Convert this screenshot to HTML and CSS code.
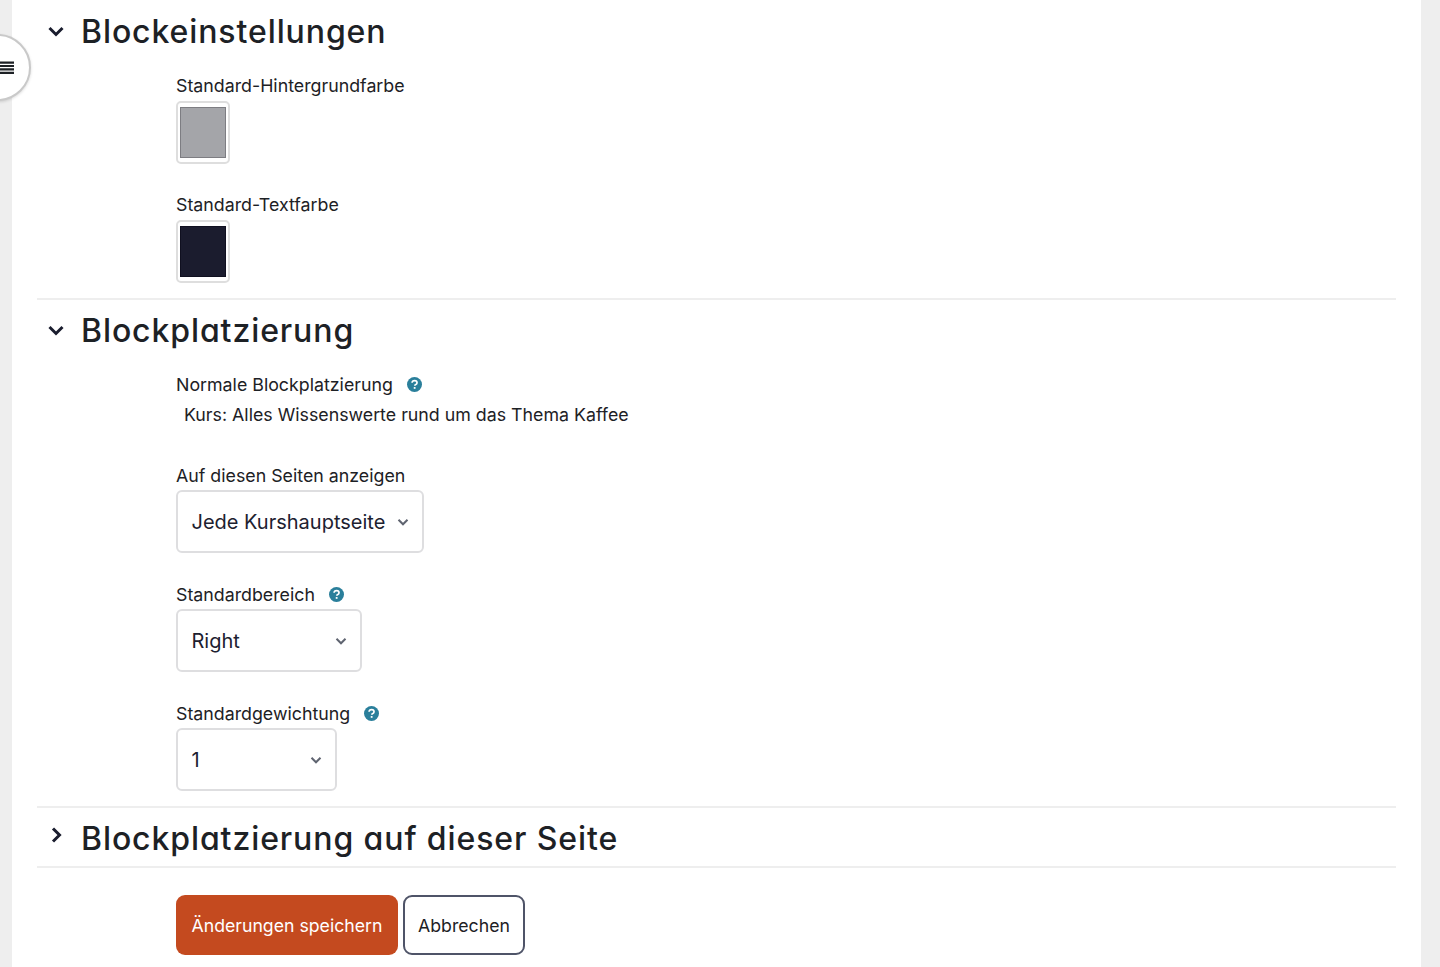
FILE: index.html
```html
<!DOCTYPE html>
<html lang="de">
<head>
    <meta charset="UTF-8">
    <meta name="viewport" content="width=device-width, initial-scale=1.0">
    <title>Blockeinstellungen</title>
    <link rel="stylesheet" href="styles.css">
</head>
<body>
    <button class="drawer-toggle" aria-label="Blockleiste">
        <svg width="14" height="14" viewBox="0 0 14 14"><path d="M0 .5h14v2.200H0zM0 3.900h14v2.200H0zM0 7.300h14v2.200H0zM0 10.700h14v2.200H0z" fill="#1d2125"/></svg>
    </button>

    <main class="page">
        <form class="settings">
            <section class="group">
                <h2 class="group-title">
                    <svg class="chevron" width="18" height="18" viewBox="0 0 18 18"><path d="M2.500 6l6.500 6.500L15.500 6" fill="none" stroke="#1a1d2e" stroke-width="3"/></svg>
                    Blockeinstellungen
                </h2>
                <div class="field field-color">
                    <label class="field-label">Standard-Hintergrundfarbe</label>
                    <div class="swatch"><span class="swatch-fill swatch-grey"></span></div>
                </div>
                <div class="field field-color">
                    <label class="field-label">Standard-Textfarbe</label>
                    <div class="swatch"><span class="swatch-fill swatch-dark"></span></div>
                </div>
            </section>

            <section class="group">
                <h2 class="group-title">
                    <svg class="chevron" width="18" height="18" viewBox="0 0 18 18"><path d="M2.500 6l6.500 6.500L15.500 6" fill="none" stroke="#1a1d2e" stroke-width="3"/></svg>
                    Blockplatzierung
                </h2>
                <div class="field">
                    <label class="field-label">Normale Blockplatzierung
                        <svg class="help" width="15" height="15" viewBox="0 0 16 16"><circle cx="8" cy="8" r="8" fill="#2a7f9b"/><path d="M5.400 6.200C5.500 4.700 6.600 3.800 8.100 3.800c1.500 0 2.600.9 2.600 2.200 0 1.100-.6 1.600-1.400 2.100-.7.400-.9.700-.9 1.300" fill="none" stroke="#fff" stroke-width="1.800"/><rect x="7.200" y="10.700" width="1.900" height="1.900" fill="#fff"/></svg>
                    </label>
                    <p class="field-static">Kurs: Alles Wissenswerte rund um das Thema Kaffee</p>
                </div>
                <div class="field">
                    <label class="field-label">Auf diesen Seiten anzeigen</label>
                    <div class="select select-wide">
                        <span>Jede Kurshauptseite</span>
                        <svg class="select-arrow" width="12" height="12" viewBox="0 0 12 12"><path d="M1.500 3.800L6 8.300l4.500-4.500" fill="none" stroke="#5f6470" stroke-width="2"/></svg>
                    </div>
                </div>
                <div class="field">
                    <label class="field-label">Standardbereich
                        <svg class="help" width="15" height="15" viewBox="0 0 16 16"><circle cx="8" cy="8" r="8" fill="#2a7f9b"/><path d="M5.400 6.200C5.500 4.700 6.600 3.800 8.100 3.800c1.500 0 2.600.9 2.600 2.200 0 1.100-.6 1.600-1.400 2.100-.7.400-.9.700-.9 1.300" fill="none" stroke="#fff" stroke-width="1.800"/><rect x="7.200" y="10.700" width="1.900" height="1.900" fill="#fff"/></svg>
                    </label>
                    <div class="select select-medium">
                        <span>Right</span>
                        <svg class="select-arrow" width="12" height="12" viewBox="0 0 12 12"><path d="M1.500 3.800L6 8.300l4.500-4.500" fill="none" stroke="#5f6470" stroke-width="2"/></svg>
                    </div>
                </div>
                <div class="field">
                    <label class="field-label">Standardgewichtung
                        <svg class="help" width="15" height="15" viewBox="0 0 16 16"><circle cx="8" cy="8" r="8" fill="#2a7f9b"/><path d="M5.400 6.200C5.500 4.700 6.600 3.800 8.100 3.800c1.500 0 2.600.9 2.600 2.200 0 1.100-.6 1.600-1.400 2.100-.7.400-.9.700-.9 1.300" fill="none" stroke="#fff" stroke-width="1.800"/><rect x="7.200" y="10.700" width="1.900" height="1.900" fill="#fff"/></svg>
                    </label>
                    <div class="select select-small">
                        <span>1</span>
                        <svg class="select-arrow" width="12" height="12" viewBox="0 0 12 12"><path d="M1.500 3.800L6 8.300l4.500-4.500" fill="none" stroke="#5f6470" stroke-width="2"/></svg>
                    </div>
                </div>
            </section>

            <section class="group group-collapsed">
                <h2 class="group-title">
                    <svg class="chevron" width="18" height="18" viewBox="0 0 18 18"><path d="M6 2.500L12.500 9 6 15.500" fill="none" stroke="#1a1d2e" stroke-width="3"/></svg>
                    Blockplatzierung auf dieser Seite
                </h2>
            </section>

            <div class="actions">
                <button type="button" class="button button-primary">Änderungen speichern</button>
                <button type="button" class="button button-secondary">Abbrechen</button>
            </div>
        </form>
    </main>
</body>
</html>
```

FILE: styles.css
```css
* {
    margin: 0;
    padding: 0;
    box-sizing: border-box;
}

html, body {
    height: 967px;
    overflow: hidden;
}

body {
    font-family: Inter, "Liberation Sans", sans-serif;
    font-size: 17.8px;
    color: #1d2125;
    background: #eeeeee;
}

.drawer-toggle {
    position: absolute;
    left: -36px;
    top: 34px;
    width: 67px;
    height: 67px;
    border-radius: 50%;
    border: 2px solid #c9c9c9;
    background: #fff;
    display: flex;
    align-items: center;
    justify-content: flex-end;
    padding-right: 15px;
    box-shadow: 0 1px 3px rgba(0,0,0,0.15);
}

.page {
    margin-left: 12px;
    width: 1409px;
    height: 967px;
    background: #fff;
    padding: 0 25px;
}

.group {
    border-bottom: 2px solid #eeeeee;
    padding-bottom: 15px;
}

.group:first-child {
    padding-top: 1px;
}

.group-collapsed {
    padding-bottom: 0;
}

.group-title {
    display: flex;
    align-items: center;
    gap: 16px;
    height: 60px;
    margin-bottom: 12px;
    padding-left: 10px;
    font-size: 32px;
    font-weight: 500;
    font-feature-settings: "cv11";
    letter-spacing: 0.9px;
    color: #1d2125;
}

.group-collapsed .group-title {
    height: 58px;
    margin-bottom: 0;
    padding-top: 2px;
}

.group-collapsed .chevron {
    margin-top: -6px;
}

.field {
    padding-left: 139px;
    margin-bottom: 29px;
}

.field-color {
    margin-bottom: 28px;
}

.field:last-child {
    margin-bottom: 0;
}

.field-label {
    display: flex;
    align-items: center;
    gap: 14px;
    height: 24px;
    margin-bottom: 3px;
}

.field-static {
    padding: 5px 8px 0;
    height: 32px;
    margin-bottom: 32px;
    color: #1d2125;
}

.swatch {
    width: 54px;
    height: 63px;
    margin-top: 4px;
    border: 2px solid #dedede;
    border-radius: 5px;
    padding: 4px 2px;
}

.swatch-fill {
    display: block;
    width: 100%;
    height: 100%;
    border: 1px solid #7d7d82;
}

.swatch-grey {
    background: #a4a5a9;
}

.swatch-dark {
    background: #1b1c2e;
    border-color: #101020;
}

.select {
    display: flex;
    align-items: center;
    justify-content: space-between;
    height: 63px;
    padding: 0 13px 0 13.500px;
    border: 2px solid #dedee0;
    border-radius: 6px;
    font-size: 20px;
    color: #1d2130;
}

.select-wide {
    width: 248px;
}

.select-medium {
    width: 186px;
}

.select-small {
    width: 161px;
}

.actions {
    display: flex;
    gap: 5px;
    padding: 27px 0 0 139px;
}

.button {
    height: 60px;
    border-radius: 9px;
    font-family: inherit;
    font-size: 17.7px;
    cursor: pointer;
}

.button-primary {
    width: 222px;
    background: #c44a1f;
    border: none;
    color: #fff;
}

.button-secondary {
    width: 122px;
    background: #fff;
    border: 2px solid #4f5468;
    color: #1d2125;
}
```
